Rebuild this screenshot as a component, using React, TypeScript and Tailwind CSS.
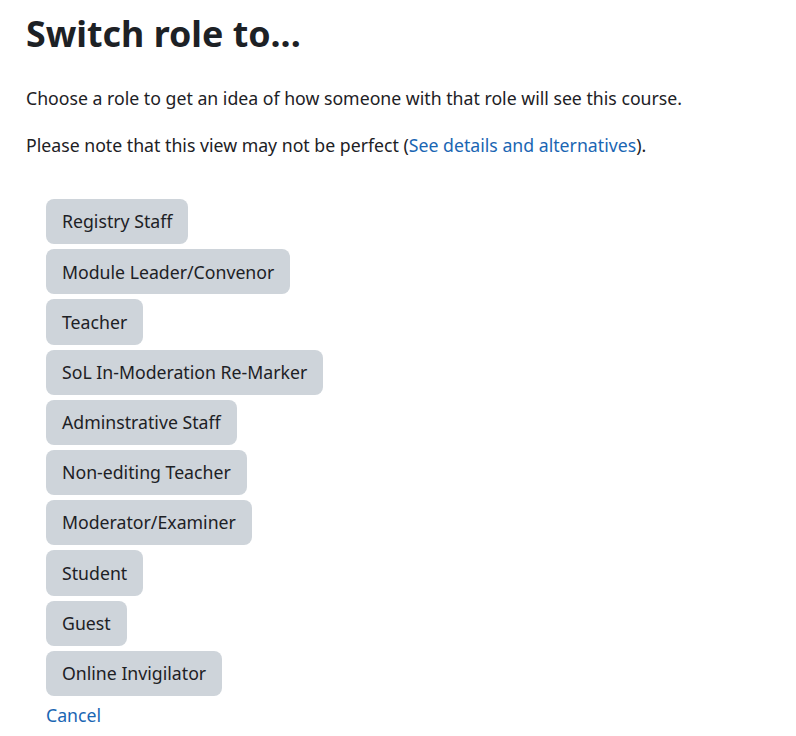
const roles = [
  "Registry Staff",
  "Module Leader/Convenor",
  "Teacher",
  "SoL In-Moderation Re-Marker",
  "Adminstrative Staff",
  "Non-editing Teacher",
  "Moderator/Examiner",
  "Student",
  "Guest",
  "Online Invigilator",
];

export default function App() {
  return (
    <div
      className="min-h-screen bg-white text-[#1d2125] pl-[26px] pt-[12px]"
      style={{ fontFamily: '"Noto Sans", "Open Sans", Arial, sans-serif' }}
    >
      <h2 className="text-[35.8px] font-bold leading-[43px] mb-[30px]">Switch role to...</h2>
      <p className="text-[17.7px] leading-[27px] mb-[20px]">
        Choose a role to get an idea of how someone with that role will see this course.
      </p>
      <p className="text-[17.7px] leading-[27px] mb-[40px]">
        Please note that this view may not be perfect (
        <a href="#" className="text-[#1a66b3]">
          See details and alternatives
        </a>
        ).
      </p>
      <div className="pl-[20px] flex flex-col items-start gap-[5px]">
        {roles.map((r) => (
          <button
            key={r}
            className="h-[45.2px] px-4 rounded-lg bg-[#ced4da] text-[17.7px] text-[#1d2125]"
          >
            {r}
          </button>
        ))}
        <a href="#" className="text-[17.7px] text-[#1a66b3] leading-[27px] mt-[1px]">
          Cancel
        </a>
      </div>
    </div>
  );
}
